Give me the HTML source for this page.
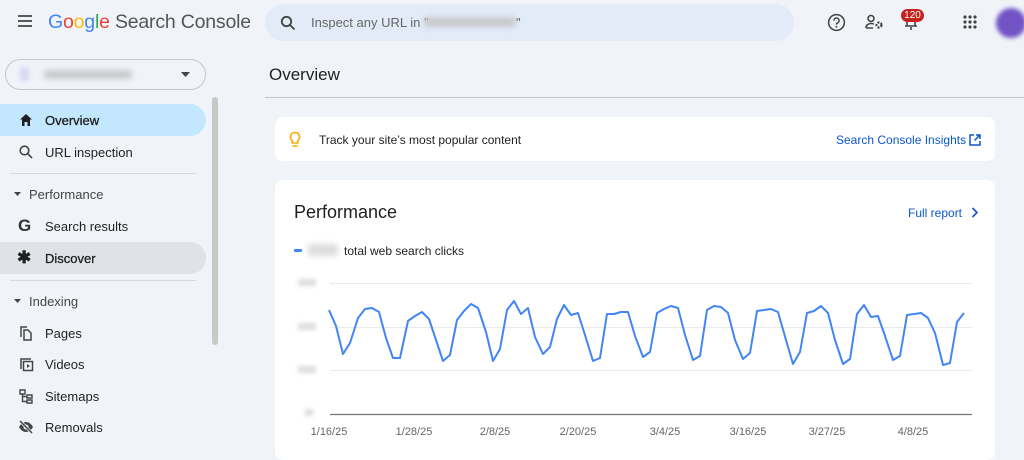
<!DOCTYPE html>
<html><head><meta charset="utf-8"><style>
*{box-sizing:border-box;margin:0;padding:0}
body{width:1024px;height:450px;overflow:hidden;background:#f0f4f9;font-family:"Liberation Sans",Arial,sans-serif;color:#1f1f1f;position:relative}
.abs{position:absolute}
.nav{position:absolute;left:0;width:206px;height:32px;border-radius:0 16px 16px 0;font-size:13px;display:flex;align-items:center}
.nav .ic{position:absolute;left:18px;top:8px;width:16px;height:16px}
.nav span{position:absolute;left:45px}
.sec{position:absolute;left:14px;font-size:13px;color:#444}
.hr{position:absolute;left:10px;width:186px;height:1px;background:#d6d9dd}
.blur{filter:blur(3px);background:#c7c9cc;border-radius:3px}
</style></head><body>
<!-- header -->
<svg class="abs" style="left:17px;top:14px" width="16" height="14" viewBox="0 0 16 14"><path d="M1 2h14M1 7h14M1 12h14" stroke="#444" stroke-width="1.8"/></svg>
<div class="abs" style="left:48px;top:11px;font-size:19.5px;letter-spacing:-0.2px"><span style="color:#4285f4">G</span><span style="color:#ea4335">o</span><span style="color:#fbbc05">o</span><span style="color:#4285f4">g</span><span style="color:#34a853">l</span><span style="color:#ea4335">e</span> <span style="color:#555">Search Console</span></div>
<div class="abs" style="left:265px;top:4px;width:529px;height:37px;border-radius:19px;background:#e3ebf9"></div>
<svg class="abs" style="left:280px;top:15px" width="16" height="16" viewBox="0 0 16 16"><circle cx="6.5" cy="6.5" r="4.7" fill="none" stroke="#444" stroke-width="1.8"/><path d="M10 10l4.5 4.5" stroke="#444" stroke-width="1.8"/></svg>
<div class="abs" style="left:311px;top:15px;font-size:13px;color:#666">Inspect any URL in "</div>
<div class="abs blur" style="left:424px;top:17px;width:92px;height:10px"></div>
<div class="abs" style="left:516px;top:15px;font-size:13px;color:#666">"</div>
<svg class="abs" style="left:827px;top:13px" width="19" height="19" viewBox="0 0 20 20"><circle cx="10" cy="10" r="8.3" fill="none" stroke="#444" stroke-width="1.6"/><path d="M7.3 8a2.7 2.7 0 1 1 3.6 2.5c-.7.3-.9.8-.9 1.7" fill="none" stroke="#444" stroke-width="1.6"/><circle cx="10" cy="14.5" r="1" fill="#444"/></svg>
<svg class="abs" style="left:865px;top:14px" width="19" height="16" viewBox="0 0 19 16"><circle cx="6" cy="4.5" r="3" fill="none" stroke="#444" stroke-width="1.6"/><path d="M1 14c0-3 2.5-4.5 5-4.5 1 0 2 .2 2.8.6M1 14h7" fill="none" stroke="#444" stroke-width="1.6"/><circle cx="14" cy="11" r="2.5" fill="none" stroke="#444" stroke-width="2.2" stroke-dasharray="2 1.3"/></svg>
<svg class="abs" style="left:904px;top:16px" width="14" height="15" viewBox="0 0 14 15"><path d="M3 3v7h8V3M1 10h12M7 11v3" fill="none" stroke="#444" stroke-width="1.6"/></svg>
<div class="abs" style="left:901px;top:9px;width:23px;height:13px;border-radius:7px;background:#c5221f;color:#fff;font-size:10px;line-height:13px;text-align:center">120</div>
<svg class="abs" style="left:963px;top:15px" width="14" height="14" viewBox="0 0 14 14" fill="#444"><circle cx="2" cy="2" r="1.6"/><circle cx="7" cy="2" r="1.6"/><circle cx="12" cy="2" r="1.6"/><circle cx="2" cy="7" r="1.6"/><circle cx="7" cy="7" r="1.6"/><circle cx="12" cy="7" r="1.6"/><circle cx="2" cy="12" r="1.6"/><circle cx="7" cy="12" r="1.6"/><circle cx="12" cy="12" r="1.6"/></svg>
<div class="abs" style="left:996px;top:8px;width:30px;height:30px;border-radius:50%;background:#7153c4;filter:blur(2px)"></div>
<!-- property -->
<div class="abs" style="left:5px;top:59px;width:201px;height:31px;border:1px solid #c4c7c5;border-radius:16px"></div>
<div class="abs" style="left:20px;top:67px;width:9px;height:14px;background:#d8d8f4;filter:blur(2px)"></div>
<div class="abs blur" style="left:44px;top:70px;width:88px;height:9px"></div>
<svg class="abs" style="left:181px;top:72px" width="9" height="5"><path d="M0 0h9L4.5 5z" fill="#444"/></svg>
<!-- scrollbar -->
<div class="abs" style="left:212px;top:97px;width:6px;height:248px;border-radius:3px;background:#c8c8c8"></div>
<!-- nav -->
<div class="nav" style="top:104px;background:#c2e7ff;font-weight:bold;color:#1f1f1f"><svg class="ic" viewBox="0 0 16 16"><path d="M8 2l6 5.5h-2V14H9.5v-4h-3v4H4V7.5H2z" fill="#1f1f1f"/></svg><span style="font-weight:normal;font-size:13px;-webkit-text-stroke:.3px #1f1f1f">Overview</span></div>
<div class="nav" style="top:136px"><svg class="ic" viewBox="0 0 16 16"><circle cx="6.5" cy="6.5" r="4.3" fill="none" stroke="#444" stroke-width="1.6"/><path d="M9.7 9.7l4.3 4.3" stroke="#444" stroke-width="1.6"/></svg><span>URL inspection</span></div>
<div class="hr" style="top:173px"></div>
<svg class="abs" style="left:14px;top:192px" width="7" height="4"><path d="M0 0h7L3.5 4z" fill="#444"/></svg>
<div class="sec" style="left:29px;top:187px">Performance</div>
<div class="nav" style="top:210px"><span style="left:18px;font-weight:bold;font-size:17px;color:#333;top:6px">G</span><span>Search results</span></div>
<div class="nav" style="top:242px;background:#dfe2e6"><span style="left:17px;font-size:17px;font-weight:bold;top:6px">✱</span><span style="-webkit-text-stroke:.3px #1f1f1f">Discover</span></div>
<div class="hr" style="top:280px"></div>
<svg class="abs" style="left:14px;top:299px" width="7" height="4"><path d="M0 0h7L3.5 4z" fill="#444"/></svg>
<div class="sec" style="left:29px;top:294px">Indexing</div>
<div class="nav" style="top:317px"><svg class="ic" viewBox="0 0 16 16"><path d="M3 12V2h6M6 5h4l3 3v7H6z" fill="none" stroke="#444" stroke-width="1.5"/></svg><span>Pages</span></div>
<div class="nav" style="top:348px"><svg class="ic" viewBox="0 0 16 16"><path d="M3 13V3h10" fill="none" stroke="#444" stroke-width="1.5"/><rect x="5.5" y="5.5" width="9" height="9" fill="none" stroke="#444" stroke-width="1.5"/><path d="M9 8v4l3-2z" fill="#444"/></svg><span>Videos</span></div>
<div class="nav" style="top:380px"><svg class="ic" viewBox="0 0 16 16"><path d="M2 2h5v4H2zM9 7h5v3H9zM9 12h5v3H9zM4.5 6v7.5H9M4.5 8.5H9" fill="none" stroke="#444" stroke-width="1.4"/></svg><span>Sitemaps</span></div>
<div class="nav" style="top:411px"><svg class="ic" viewBox="0 0 16 16"><path d="M1 8c2-3.5 4.5-5 7-5s5 1.5 7 5c-2 3.5-4.5 5-7 5S3 11.5 1 8z" fill="#444"/><circle cx="8" cy="8" r="2.5" fill="#f0f4f9"/><path d="M2 2l12 12" stroke="#f0f4f9" stroke-width="3"/><path d="M2 2l12 12" stroke="#444" stroke-width="1.5"/></svg><span>Removals</span></div>
<!-- main -->
<div class="abs" style="left:269px;top:65px;font-size:17px;color:#1f1f1f">Overview</div>
<div class="abs" style="left:265px;top:97px;width:759px;height:1px;background:#c4c7c5"></div>
<div class="abs" style="left:275px;top:117px;width:720px;height:44px;background:#fff;border-radius:8px"></div>
<svg class="abs" style="left:289px;top:131px" width="12" height="17" viewBox="0 0 12 17"><path d="M6 1.5a4.5 4.5 0 0 0-2.7 8.1V12h5.4V9.6A4.5 4.5 0 0 0 6 1.5z" fill="none" stroke="#f9ab00" stroke-width="1.6"/><path d="M3.5 15h5" stroke="#f9ab00" stroke-width="1.6"/></svg>
<div class="abs" style="left:319px;top:133px;font-size:12px;color:#1f1f1f">Track your site’s most popular content</div>
<div class="abs" style="left:836px;top:133px;font-size:12px;color:#0b57d0">Search Console Insights</div>
<svg class="abs" style="left:969px;top:134px" width="12" height="12" viewBox="0 0 12 12"><path d="M5 1H1v10h10V7M7 1h4v4M11 1L5.5 6.5" fill="none" stroke="#0b57d0" stroke-width="1.5"/></svg>
<div class="abs" style="left:275px;top:180px;width:720px;height:280px;background:#fff;border-radius:8px"></div>
<div class="abs" style="left:294px;top:202px;font-size:18px;color:#1f1f1f">Performance</div>
<div class="abs" style="left:908px;top:206px;font-size:12px;color:#0b57d0">Full report</div>
<svg class="abs" style="left:971px;top:207px" width="8" height="11"><path d="M1.5 1l4.5 4.5L1.5 10" fill="none" stroke="#0b57d0" stroke-width="1.6"/></svg>
<div class="abs" style="left:294px;top:249px;width:8px;height:3px;background:#4285f4;border-radius:1px"></div>
<div class="abs blur" style="left:308px;top:244px;width:30px;height:12px;background:#ddd"></div>
<div class="abs" style="left:344px;top:244px;font-size:12px;color:#1f1f1f">total web search clicks</div>
<svg class="abs" style="left:290px;top:270px" width="700" height="180">
<g fill="#ddd" style="filter:blur(2px)"><rect x="8" y="9" width="18" height="7"/><rect x="8" y="53" width="18" height="7"/><rect x="8" y="96" width="18" height="7"/><rect x="15" y="139" width="8" height="7"/></g>
<g stroke="#e8eaed" stroke-width="1"><path d="M40 13.5H682M40 57.5H682M40 100.5H682"/></g>
<path d="M40 144.5H682" stroke="#777" stroke-width="1.2"/>
<polyline fill="none" stroke="#4285f4" stroke-width="2" stroke-linejoin="round" transform="translate(-290,-270)" points="329,310 336,326 343,354 350,343 358,318 365,309 372,308 379,312 386,338 393,358 400,358 408,321 415,316 422,312 429,319 436,340 443,361 450,355 457,320 464,311 471,304 478,308 486,332 493,361 500,349 507,310 514,301 521,314 528,308 535,337 543,354 550,347 557,319 564,305 571,315 578,313 585,335 593,361 600,358 607,314 614,314 621,312 628,312 635,336 643,357 650,352 657,313 664,309 671,306 678,308 685,335 693,360 700,356 707,310 714,306 721,307 728,313 735,340 743,359 750,353 757,311 764,310 771,309 778,312 786,340 793,364 800,352 807,313 814,311 821,306 828,313 835,340 843,364 850,359 857,314 864,305 871,317 878,316 885,336 893,360 900,356 907,315 914,314 921,313 928,318 935,333 943,365 950,363 957,322 964,313"/>
<g font-size="11" fill="#666" font-family="Liberation Sans,Arial,sans-serif" text-anchor="middle">
<text x="39" y="165">1/16/25</text><text x="124" y="165">1/28/25</text><text x="205" y="165">2/8/25</text><text x="288" y="165">2/20/25</text><text x="375" y="165">3/4/25</text><text x="458" y="165">3/16/25</text><text x="537" y="165">3/27/25</text><text x="623" y="165">4/8/25</text></g>
</svg>
</body></html>
